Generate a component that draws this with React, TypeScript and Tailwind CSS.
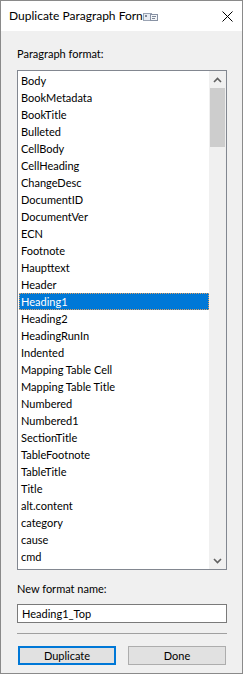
import React from "react";

const items = [
  "Body","BookMetadata","BookTitle","Bulleted","CellBody","CellHeading","ChangeDesc","DocumentID","DocumentVer","ECN","Footnote","Haupttext","Header","Heading1","Heading2","HeadingRunIn","Indented","Mapping Table Cell","Mapping Table Title","Numbered","Numbered1","SectionTitle","TableFootnote","TableTitle","Title","alt.content","category","cause","cmd",
];

const font = { fontFamily: 'Lato, "Noto Sans", sans-serif' };

export default function App() {
  return (
    <div className="w-[244px] h-[682px] bg-white overflow-hidden relative text-[11px] text-black" style={font}>
      <div className="w-[243px] h-[674px] border border-[#8a8a8a] flex flex-col bg-[#f0f0f0]">
        <div className="h-[30px] bg-white flex items-center shrink-0">
          <span className="ml-[8px] leading-[16px] text-[12px] text-[#000]">Duplicate Paragraph Forn</span>
          <svg width="15" height="9" viewBox="0 0 15 9" className="mt-[2px]">
            <rect x="0.5" y="0.5" width="8" height="7" fill="#e8ecf2" stroke="#9aa3b3" />
            <rect x="7.5" y="1.5" width="7" height="6" fill="#f4f6f9" stroke="#8892a4" />
            <rect x="2" y="2" width="2" height="2" fill="#7d8796" />
            <rect x="9" y="3" width="4" height="1" fill="#7d8796" />
            <rect x="9" y="5" width="3" height="1" fill="#7d8796" />
          </svg>
          <div className="flex-1" />
          <svg width="11" height="11" viewBox="0 0 11 11" className="mr-[9px] mt-[0px]">
            <path d="M0.5 0.5 L10.5 10.5 M10.5 0.5 L0.5 10.5" stroke="#000" strokeWidth="1" />
          </svg>
        </div>
        <div className="flex flex-col px-[16px] flex-1">
          <div className="mt-[15px] leading-[16px] h-[16px]">Paragraph format:</div>
          <div className="mt-[8px] w-[210px] h-[500px] border border-[#828790] bg-white flex">
            <div className="flex-1 pt-[1px] pl-[1px]">
              {items.map((it) => (
                <div
                  key={it}
                  className={
                    it === "Heading1"
                      ? "h-[17px] leading-[15px] pl-[1px] bg-[#0078d7] text-white border border-dotted border-[#e0a060]"
                      : "h-[17px] leading-[17px] pl-[2px]"
                  }
                >
                  {it}
                </div>
              ))}
            </div>
            <div className="w-[17px] bg-[#f0f0f0] flex flex-col">
              <div className="h-[17px] flex items-center justify-center">
                <svg width="9" height="6" viewBox="0 0 9 6">
                  <path d="M1 5 L4.5 1.5 L8 5" stroke="#606060" strokeWidth="1.6" fill="none" />
                </svg>
              </div>
              <div className="mx-[1px] h-[59px] bg-[#cdcdcd]" />
              <div className="flex-1" />
              <div className="h-[17px] flex items-center justify-center">
                <svg width="9" height="6" viewBox="0 0 9 6">
                  <path d="M1 1 L4.5 4.5 L8 1" stroke="#606060" strokeWidth="1.6" fill="none" />
                </svg>
              </div>
            </div>
          </div>
          <div className="mt-[11px] leading-[16px] h-[16px]">New format name:</div>
          <div className="mt-[7px] w-[210px] h-[19px] border border-[#7a7a7a] bg-white flex items-center pl-[4px] leading-[16px]">
            Heading1_Top
          </div>
          <div className="mt-[10px] w-[210px] h-[1px] bg-[#a0a0a0]" />
          <div className="mt-[12px] flex gap-[12px] pl-[1px]">
            <div className="w-[98px] h-[19px] border-2 border-[#0078d7] bg-[#e1e1e1] flex items-center justify-center leading-[16px]">
              Duplicate
            </div>
            <div className="w-[98px] h-[19px] border border-[#adadad] bg-[#e1e1e1] flex items-center justify-center leading-[16px]">
              Done
            </div>
          </div>
        </div>
      </div>
    </div>
  );
}
